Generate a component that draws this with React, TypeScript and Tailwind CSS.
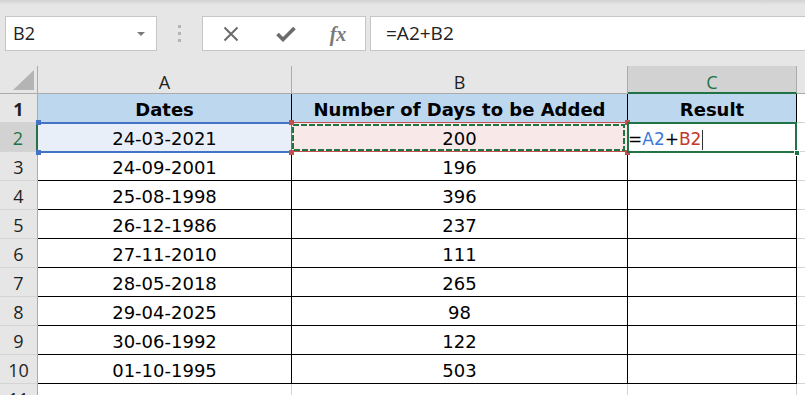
const dates = ['24-03-2021', '24-09-2001', '25-08-1998', '26-12-1986', '27-11-2010', '28-05-2018', '29-04-2025', '30-06-1992', '01-10-1995'];
const days = ['200', '196', '396', '237', '111', '265', '98', '122', '503'];

const uiFont = "font-['Open_Sans',sans-serif]";
const cellFont = "font-['DejaVu_Sans',sans-serif]";

const TopBar = () => (
	<div className="h-[66px] bg-[#e6e6e6] flex flex-col">
		<div className="h-[5px] bg-linear-to-b from-[#d2d2d2] to-[#e6e6e6]" />
		{/* Name box / buttons / formula input */}
		<div className="flex items-center mt-[11px] pl-[5px] h-[35px]">
			<div className="w-[152px] h-[35px] bg-white border border-[#c6c6c6] flex items-center justify-between pl-[7px] pr-[11px]">
				<span className={`${uiFont} text-[18px] text-[#222]`}>B2</span>
				<div className="w-0 h-0 border-l-[4px] border-r-[4px] border-t-[4px] border-l-transparent border-r-transparent border-t-[#7a7a7a]" />
			</div>
			<div className="w-[45px] flex flex-col items-center gap-[4px]">
				<div className="w-[3px] h-[3px] bg-[#b4b4b4]" />
				<div className="w-[3px] h-[3px] bg-[#b4b4b4]" />
				<div className="w-[3px] h-[3px] bg-[#b4b4b4]" />
			</div>
			<div className="w-[164px] h-[35px] bg-white border border-[#c6c6c6] flex items-center">
				<div className="w-[56px] flex justify-center">
					<svg width="16" height="16" viewBox="0 0 16 16">
						<path d="M1.5 1.5 L14.5 14.5 M14.5 1.5 L1.5 14.5" stroke="#6b6b6b" strokeWidth="2" />
					</svg>
				</div>
				<div className="w-[54px] flex justify-center">
					<svg width="20" height="16" viewBox="0 0 20 16">
						<path d="M1.5 8 L7 13.5 L18.5 2" stroke="#6b6b6b" strokeWidth="3.6" fill="none" />
					</svg>
				</div>
				<div className="flex-1 flex justify-center pr-[2px]">
					<span className="font-['Liberation_Serif',serif] italic font-bold text-[20px] text-[#7a7a7a] leading-none">fx</span>
				</div>
			</div>
			<div className="ml-[4px] flex-1 h-[35px] bg-white border-y border-l border-[#c6c6c6] flex items-center pl-[15px]">
				<span className={`${uiFont} text-[19px] text-[#222]`}>=A2+B2</span>
			</div>
		</div>
	</div>
);

const ColumnHeaders = () => (
	<div className={`flex h-[28px] bg-[#e6e6e6] ${uiFont} text-[18px] leading-none text-[#1f1f1f]`}>
		<div className="w-[38px] border-r border-b border-[#ababab] relative">
			<svg className="absolute left-[13px] top-[4px]" width="21" height="20" viewBox="0 0 21 20">
				<polygon points="21,0 21,20 0,20" fill="#b4b4b4" />
			</svg>
		</div>
		<div className="w-[254px] border-r border-b border-[#ababab] flex items-end justify-center pb-[2px]">A</div>
		<div className="w-[336px] border-r border-b border-[#ababab] flex items-end justify-center pb-[2px]">B</div>
		<div className="w-[169px] bg-[#d2d2d2] border-r border-[#ababab] border-b-2 border-b-[#217346] flex items-end justify-center pb-[1px] text-[#217346]">C</div>
		<div className="flex-1 border-b border-[#ababab]" />
	</div>
);

const RowHeader = ({ n, active }: { n: number; active?: boolean }) => (
	<div
		className={
			active
				? `w-[38px] bg-[#d2d2d2] border-r-2 border-r-[#217346] border-b border-b-[#d4d4d4] flex items-end justify-center pb-[4px] ${uiFont} text-[18px] leading-none text-[#217346]`
				: `w-[38px] bg-[#e6e6e6] border-r border-r-[#ababab] border-b border-b-[#d4d4d4] flex items-end justify-center pb-[4px] ${uiFont} text-[18px] leading-none text-[#1f1f1f]`
		}
	>
		{n}
	</div>
);

const cell = 'border-r border-b border-black flex items-end justify-center pb-[3px]';

const HeaderRow = () => (
	<div className={`flex h-[29px] ${cellFont} font-bold text-[18px] leading-none text-black`}>
		<RowHeader n={1} />
		<div className={`w-[254px] bg-[#bdd7ee] ${cell}`}>Dates</div>
		<div className={`w-[336px] bg-[#bdd7ee] ${cell}`}>Number of Days to be Added</div>
		<div className={`w-[169px] bg-[#bdd7ee] ${cell}`}>Result</div>
		<div className="flex-1 border-b border-[#d4d4d4]" />
	</div>
);

const EditRow = () => (
	<div className={`flex h-[29px] ${cellFont} text-[18px] leading-none text-black`}>
		<RowHeader n={2} active />
		{/* A2 - blue reference range */}
		<div className={`w-[254px] bg-[#e9eff8] ${cell} relative`}>
			{dates[0]}
			<div className="absolute left-0 right-[-1px] top-[-1px] h-[2px] bg-[#4472c4]" />
			<div className="absolute left-0 right-[-1px] bottom-[-2px] h-[2px] bg-[#4472c4]" />
			<div className="absolute left-[-2px] top-[-3px] w-[5px] h-[5px] bg-[#4472c4]" />
			<div className="absolute left-[-2px] bottom-[-4px] w-[5px] h-[5px] bg-[#4472c4]" />
		</div>
		{/* B2 - red reference range, copied */}
		<div className={`w-[336px] bg-[#f8e9e8] ${cell} relative`}>
			{days[0]}
			<div className="absolute left-[-1px] right-[-1px] top-[-1px] bottom-[-1px] border border-[#c0504d]" />
			<svg className="absolute left-0 top-0" width="335" height="28" viewBox="0 0 335 28">
				<rect x="1" y="2" width="331" height="25" fill="none" stroke="#217346" strokeWidth="2" strokeDasharray="6 2" />
			</svg>
			<div className="absolute left-[-3px] top-[-3px] w-[5px] h-[5px] bg-[#c0504d]" />
			<div className="absolute right-[-3px] top-[-3px] w-[5px] h-[5px] bg-[#c0504d]" />
			<div className="absolute left-[-3px] bottom-[-4px] w-[5px] h-[5px] bg-[#c0504d]" />
			<div className="absolute right-[-3px] bottom-[-4px] w-[5px] h-[5px] bg-[#c0504d]" />
		</div>
		{/* C2 - active cell in edit mode */}
		<div className="w-[169px] bg-white border-r border-b border-black flex items-end pb-[3px] text-[17px] relative">
			<span>=</span>
			<span className="text-[#3b78d8]">A2</span>
			<span>+</span>
			<span className="text-[#c0392b]">B2</span>
			<span className="w-[1px] h-[20px] bg-[#333] ml-[1px] mb-[-2px]" />
			<div className="absolute left-[-1px] right-[-1px] top-[-1px] bottom-[-2px] border-2 border-[#217346]" />
			<div className="absolute right-[-4px] bottom-[-5px] w-[6px] h-[6px] bg-[#217346] border border-white" />
		</div>
		<div className="flex-1 border-b border-[#d4d4d4]" />
	</div>
);

const DataRow = ({ n, date, day }: { n: number; date: string; day: string }) => (
	<div className={`flex h-[29px] ${cellFont} text-[18px] leading-none text-black`}>
		<RowHeader n={n} />
		<div className={`w-[254px] ${cell}`}>{date}</div>
		<div className={`w-[336px] ${cell}`}>{day}</div>
		<div className="w-[169px] border-r border-b border-black" />
		<div className="flex-1 border-b border-[#d4d4d4]" />
	</div>
);

const EmptyRow = ({ n }: { n: number }) => (
	<div className={`flex h-[29px] ${cellFont} text-[18px]`}>
		<RowHeader n={n} />
		<div className="w-[254px] border-r border-b border-[#d4d4d4]" />
		<div className="w-[336px] border-r border-b border-[#d4d4d4]" />
		<div className="w-[169px] border-r border-b border-[#d4d4d4]" />
		<div className="flex-1 border-b border-[#d4d4d4]" />
	</div>
);

const App = () => {
	return (
		<div className="w-[805px] h-[395px] overflow-hidden bg-white">
			<TopBar />
			<ColumnHeaders />
			<HeaderRow />
			<EditRow />
			{dates.slice(1).map((d, i) => (
				<DataRow key={d} n={i + 3} date={d} day={days[i + 1]} />
			))}
			<EmptyRow n={11} />
		</div>
	);
};

export default App;
